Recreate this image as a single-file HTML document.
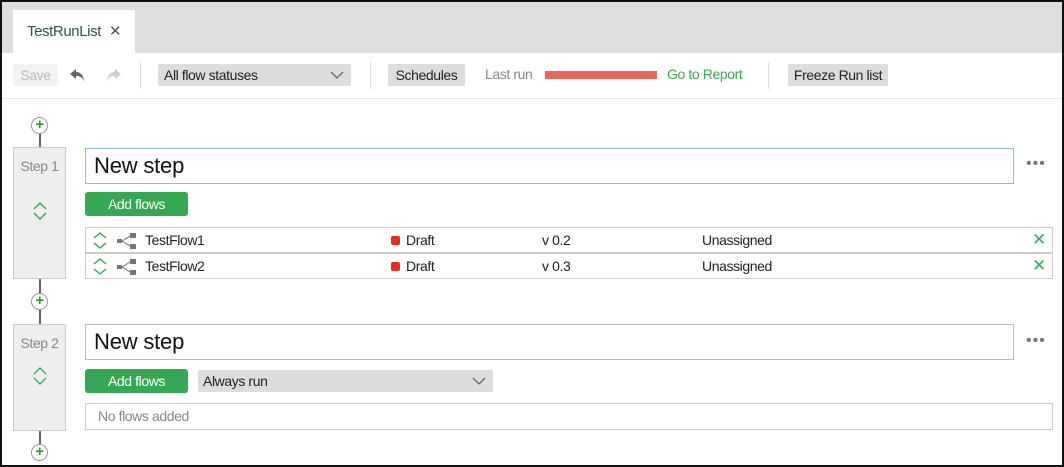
<!DOCTYPE html>
<html><head><meta charset="utf-8"><style>
*{box-sizing:border-box;margin:0;padding:0}
body{width:1064px;height:467px;overflow:hidden;background:#fff;font-family:"Liberation Sans",sans-serif;font-size:14px;letter-spacing:-0.4px;color:#222;position:relative}
.a{position:absolute}
.frame{left:0;top:0;width:1064px;height:467px;border:2px solid #111;z-index:10;pointer-events:none}
.btn{background:#ddd;border-radius:2px;text-align:center;line-height:22px;font-size:14px;color:#222}
.green{background:#35a853;color:#fff;border-radius:3px;text-align:center;line-height:24px;font-size:14px}
.sep{width:1px;background:#ddd}
.vl{width:2px;background:#666;left:39px}
.plus{width:17px;height:17px;border:1px solid #999;border-radius:50%;background:#fff;color:#2a9a40;font-weight:bold;font-size:15px;line-height:14px;text-align:center}
.step{left:13px;width:53px;background:#eee;border:1px solid #ccc;color:#888;text-align:center;font-size:14px;padding-top:10px}
.inp{left:85px;width:929px;height:36px;border:1px solid #bbb;font-size:22px;line-height:34px;padding-left:8px;color:#111;letter-spacing:-0.2px}
.row{left:85px;width:968px;height:26px;border:1px solid #ccc;font-size:14px;line-height:24px}
.row span{position:absolute}
</style></head><body>
<div class="a frame"></div>
<div class="a" style="left:0;top:0;width:1064px;height:53px;background:#dedede"></div>
<div class="a" style="left:13px;top:10px;width:122px;height:44px;background:#fff;line-height:44px;padding-left:14px;color:#2c5555;font-size:15px">TestRunList<span style="position:absolute;left:96px;color:#555;font-size:15px">✕</span></div>
<div class="a" style="left:0;top:98px;width:1064px;height:1px;background:#e6e6e6"></div>
<div class="a btn" style="left:13px;top:64px;width:45px;background:#f2f2f2;color:#bbb">Save</div>
<svg class="a" style="left:68px;top:66px" width="20" height="18" viewBox="0 0 20 18"><path d="M8 3 L2 8 L8 13 V10 C12 10 15 11 16 16 C16 10 13 6 8 6 Z" fill="#666"/></svg>
<svg class="a" style="left:103px;top:66px" width="20" height="18" viewBox="0 0 20 18"><path d="M12 3 L18 8 L12 13 V10 C8 10 5 11 4 16 C4 10 7 6 12 6 Z" fill="#ccc"/></svg>
<div class="a sep" style="left:140px;top:62px;height:27px"></div>
<div class="a btn" style="left:158px;top:64px;width:193px;text-align:left;padding-left:6px">All flow statuses</div>
<svg class="a" style="left:330px;top:70px" width="14" height="10"><path d="M1 2 L7 8 L13 2" stroke="#666" fill="none" stroke-width="1.3"/></svg>
<div class="a sep" style="left:370px;top:62px;height:27px"></div>
<div class="a btn" style="left:388px;top:64px;width:77px">Schedules</div>
<div class="a" style="left:485px;top:66px;color:#888">Last run</div>
<div class="a" style="left:545px;top:71px;width:112px;height:8px;background:#ee6458"></div>
<div class="a" style="left:667px;top:66px;color:#3aaa55;font-size:14px">Go to Report</div>
<div class="a sep" style="left:768px;top:62px;height:27px"></div>
<div class="a btn" style="left:788px;top:64px;width:100px">Freeze Run list</div>

<div class="a vl" style="top:133px;height:14px"></div>
<div class="a plus" style="left:31px;top:117px">+</div>
<div class="a step" style="top:147px;height:132px">Step 1
<svg style="display:block;margin:28px auto 0" width="14" height="18"><path d="M1 7 L7 1 L13 7 M1 11 L7 17 L13 11" stroke="#35a853" fill="none" stroke-width="1.4"/></svg></div>
<div class="a inp" style="top:148px;border-color:#8ab8e8">New step</div>
<div class="a" style="left:1026px;top:155px;color:#777;font-size:16px;letter-spacing:1px">•••</div>
<div class="a green" style="left:85px;top:192px;width:103px">Add flows</div>

<div class="a row" style="top:227px"><svg style="position:absolute;left:7px;top:4px" width="14" height="18"><path d="M1 6 L7 1 L13 6 M1 11 L7 16 L13 11" stroke="#35a853" fill="none" stroke-width="1.4"/></svg><svg style="position:absolute;left:31px;top:5px" width="20" height="16"><rect x="0" y="6" width="5" height="4" fill="#777"/><rect x="13" y="0" width="6" height="5" fill="#777"/><rect x="13" y="11" width="6" height="5" fill="#777"/><path d="M5 8 L13 3 M5 8 L13 13" stroke="#777"/></svg><span style="left:59px">TestFlow1</span><span style="left:305px;top:8px;width:9px;height:9px;background:#ee2a1b;border-radius:2px"></span><span style="left:320px">Draft</span><span style="left:456px">v 0.2</span><span style="left:616px">Unassigned</span><span style="left:946px;color:#3aaa55;font-size:17px">✕</span></div>
<div class="a row" style="top:253px"><svg style="position:absolute;left:7px;top:4px" width="14" height="18"><path d="M1 6 L7 1 L13 6 M1 11 L7 16 L13 11" stroke="#35a853" fill="none" stroke-width="1.4"/></svg><svg style="position:absolute;left:31px;top:5px" width="20" height="16"><rect x="0" y="6" width="5" height="4" fill="#777"/><rect x="13" y="0" width="6" height="5" fill="#777"/><rect x="13" y="11" width="6" height="5" fill="#777"/><path d="M5 8 L13 3 M5 8 L13 13" stroke="#777"/></svg><span style="left:59px">TestFlow2</span><span style="left:305px;top:8px;width:9px;height:9px;background:#ee2a1b;border-radius:2px"></span><span style="left:320px">Draft</span><span style="left:456px">v 0.3</span><span style="left:616px">Unassigned</span><span style="left:946px;color:#3aaa55;font-size:17px">✕</span></div>

<div class="a vl" style="top:279px;height:45px"></div>
<div class="a plus" style="left:31px;top:293px">+</div>
<div class="a step" style="top:324px;height:107px">Step 2
<svg style="display:block;margin:16px auto 0" width="14" height="18"><path d="M1 7 L7 1 L13 7 M1 11 L7 17 L13 11" stroke="#35a853" fill="none" stroke-width="1.4"/></svg></div>
<div class="a inp" style="top:324px">New step</div>
<div class="a" style="left:1026px;top:332px;color:#777;font-size:16px;letter-spacing:1px">•••</div>
<div class="a green" style="left:85px;top:369px;width:103px">Add flows</div>
<div class="a btn" style="left:198px;top:370px;width:295px;text-align:left;padding-left:5px">Always run</div>
<svg class="a" style="left:472px;top:376px" width="14" height="10"><path d="M1 2 L7 8 L13 2" stroke="#666" fill="none" stroke-width="1.3"/></svg>
<div class="a row" style="top:403px;height:27px;padding-left:12px;color:#888">No flows added</div>
<div class="a vl" style="top:431px;height:15px"></div>
<div class="a plus" style="left:31px;top:444px">+</div>
</body></html>
